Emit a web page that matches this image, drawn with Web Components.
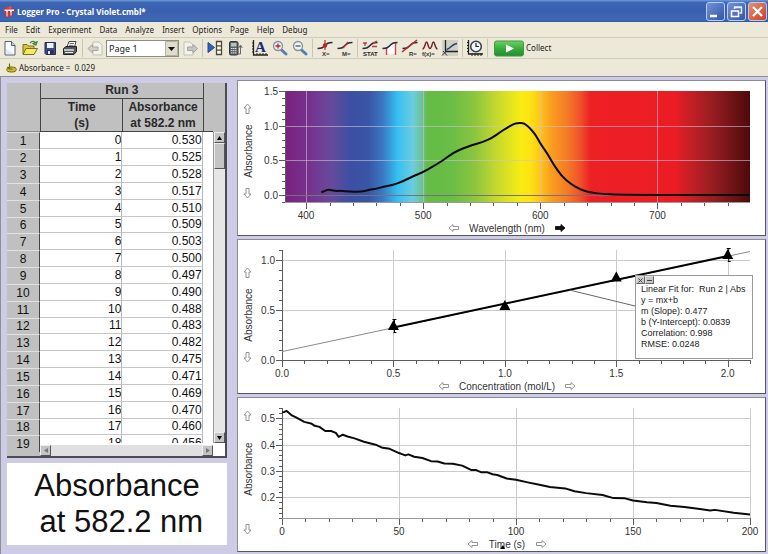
<!DOCTYPE html>
<html lang="en">
<head>
<meta charset="utf-8">
<title>Logger Pro - Crystal Violet.cmbl*</title>
<style>
  html, body { height: 100%; }
  body { margin: 0; font-family: "Liberation Sans", Arial, sans-serif; color: #222; }
</style>
</head>
<body>
<logger-app></logger-app>
<script>
const define = (name, html, extra) => {
  const tpl = document.createElement('template');
  tpl.innerHTML = html;
  customElements.define(name, class extends HTMLElement {
    constructor() {
      super();
      this.attachShadow({ mode: 'open' }).append(tpl.content.cloneNode(true));
    }
    connectedCallback() { if (extra) extra(this, this.shadowRoot); }
  });
};

/* ---------- icons ---------- */
const curve = '<path d="M0.5 8.5C5 8.5 6 7.500 8 5.500S11 2.500 15.500 2.500" fill="none" stroke="#2b2b45" stroke-width="1.600"/>';
const tiny = (x, t) => `<text x="${x}" y="15.500" font-family="Liberation Sans" font-size="6" font-weight="bold" fill="#333">${t}</text>`;
const ICONS = {
  new: '<path d="M3 1.500h6.500l3.500 4v9.500H3z" fill="#f8fbff" stroke="#52607c"/><path d="M9.500 1.500v4H13" fill="#b9d0ec" stroke="#52607c"/><path d="M4 14V9l8 5z" fill="#dfe9f7"/>',
  open: '<path d="M1 14V4.500h4l1.500 1.500H12v8z" fill="#d8c43c" stroke="#77701c"/><path d="M1 14.500l3-6h11.500l-3.500 6z" fill="#f6e860" stroke="#77701c"/><path d="M8 3c2-2.500 5-2 5.500.500M15 2l-1.200 3-2.600-1.500z" fill="none" stroke="#3d8a2e" stroke-width="1.300"/>',
  save: '<path d="M3 2.500h10.500v12H4L3 13.500z" fill="#3d4b86" stroke="#232b58"/><path d="M5 3h6.500v5H5z" fill="#f0f3fa"/><path d="M5 10h6.500v4.500H5z" fill="#2a2f50"/><path d="M6 11h2v3H6z" fill="#dfe4ee"/>',
  print: '<path d="M5 7l2-5.500h7L12.500 7z" fill="#fff" stroke="#444"/><path d="M7.500 3.500H12M7 5.300h4.500" stroke="#777"/><path d="M1.500 8.500L4 6.500h10.500v5L12 14.500H1.500z" fill="#55585c" stroke="#222"/><path d="M2 9h10v2H2z" fill="#c0c4c4"/><path d="M3 12.500h8" stroke="#eee"/>',
  prev: '<path d="M6 2h6l3 3v10H6z" fill="#f4f2ec" stroke="#c4c0b2"/><path d="M1 8.500l4.500-4v2.500H11v3.500H5.500V13z" fill="#d2cfc6" stroke="#aaa698"/>',
  next: '<path d="M2 2h6l3 3v10H2z" fill="#f4f2ec" stroke="#c4c0b2"/><path d="M15.500 8.500L11 4.500v2.500H5.500v3.500H11V13z" fill="#c6c6c2" stroke="#a4a29a"/>',
  import: '<path d="M1 2.500l6.500 5L1 12.500z" fill="#2f62ba" stroke="#1f4790"/><path d="M9.500 1.500h5v13h-5zM9.500 5.800h5M9.500 10.200h5" fill="#fffbe6" stroke="#4a4a3e" stroke-width="1.300"/>',
  calc: '<rect x="2.500" y="1.500" width="8.500" height="13.500" rx="1.500" fill="#596268" stroke="#30363a"/><path d="M4 3h5.500v3.500H4z" fill="#b5c6b4"/><path d="M4 8.500h5.500M4 10.700h5.500M4 12.900h5.500" stroke="#e0e4e4" stroke-dasharray="1.500 .5"/><path d="M13.500 13V6M11.700 8l1.800-3 1.800 3M11 14h2.500V12" fill="none" stroke="#666"/>',
  autoscale: '<path d="M1.500 0v15H16" fill="none" stroke="#222" stroke-width="1.300"/><path d="M0 3h2M0 6h2M0 9h2M0 12h2M5 13v2M8 13v2M11 13v2M14 13v2" stroke="#222"/><text x="3" y="12" font-family="Liberation Serif" font-weight="bold" font-size="15" fill="#1b2c78">A</text>',
  zoomin: '<path d="M8.500 9l5.500 5" stroke="#587dad" stroke-width="3" stroke-linecap="round"/><circle cx="6" cy="6" r="4.500" fill="#eef2f2" stroke="#8b9098" stroke-width="1.300"/><path d="M3.500 6h5M6 3.500v5" stroke="#b02a2a" stroke-width="1.300"/>',
  zoomout: '<path d="M8.500 9l5.500 5" stroke="#587dad" stroke-width="3" stroke-linecap="round"/><circle cx="6" cy="6" r="4.500" fill="#eef2f2" stroke="#8b9098" stroke-width="1.300"/><path d="M3.500 6h5" stroke="#555" stroke-width="1.300"/>',
  examine: curve + '<path d="M8 0v10" stroke="#c02626" stroke-width="1.200"/><circle cx="8" cy="5.500" r="2.200" fill="#c02626"/>' + tiny(5, 'X='),
  tangent: curve + '<path d="M6 8l5-6" stroke="#a33" stroke-width="1.300"/>' + tiny(5, 'M='),
  stats: curve + '<path d="M1 3h4M3 3v3M10 6.500h5M11 3l4-2" stroke="#c63a3a" stroke-width="1.300"/><text x="1" y="15.500" font-family="Liberation Sans" font-size="6" font-weight="bold" fill="#222">STAT</text>',
  integral: '<path d="M4.500 7.500C8 6 8 3 13 2.500v11H4.500z" fill="#fff"/><path d="M4.500 7v8M13.500 2v13" stroke="#cf4444" stroke-width="1.400"/>' + curve,
  linfit: curve + '<path d="M0 12L15 0" stroke="#b82e2e" stroke-width="1.600"/>' + tiny(7, 'R='),
  curvefit: '<path d="M0.500 9C3 9 3 2 4.500 2S6 8.500 8 8.500 10 2 11.500 2s1.500 7 4 7" fill="none" stroke="#7c1f2e" stroke-width="1.500"/><text x="0" y="15.500" font-family="Liberation Sans" font-size="6" font-weight="bold" fill="#333">f(x)=</text>',
  model: '<rect width="16" height="16" fill="#d2cfc3"/><path d="M3.500 0v11.500H16" fill="none" stroke="#222" stroke-width="1.300"/><path d="M4.500 9.500C9 9 9 4 15 3.500" fill="none" stroke="#27407a" stroke-width="1.600"/><path d="M0 15.500l5-5M1 11l4 4.500" stroke="#333"/>',
  clock: '<path d="M1.500 0v14H16" fill="none" stroke="#222" stroke-width="1.300"/><path d="M0 2.500h2M0 5.500h2M0 8.500h2M0 11.500h2M5 13v3M8 13v3M11 13v3M14 13v3" stroke="#222"/><circle cx="9" cy="6.500" r="5.300" fill="#f4f6fa" stroke="#343c52" stroke-width="1.500"/><path d="M9 3v3.500h3" fill="none" stroke="#222" stroke-width="1.200"/>'
};
define('tool-button', `
<style>
  :host { display: block; flex: none; }
  button { display: grid; place-items: center; width: 20px; height: 20px; padding: 0; border: 0; background: none; }
  svg { display: block; width: 16px; height: 16px; overflow: visible; }
</style>
<button type="button"><svg viewBox="0 0 16 16" aria-hidden="true"></svg></button>`,
(host, root) => {
  root.querySelector('svg').innerHTML = ICONS[host.getAttribute('icon')];
  root.querySelector('button').setAttribute('aria-label', host.getAttribute('label'));
});

define('tool-separator', `
<style>
  :host { display: block; flex: none; width: 5px; height: 18px; }
  i { display: block; width: 1px; height: 100%; margin-left: 2px; background: #c9c5b4; }
  :host([blank]) i { background: none; }
</style><i></i>`);

/* ---------- title bar ---------- */
define('title-bar', `
<style>
  :host { display: flex; align-items: center; gap: 2px; flex: none; height: 22px; padding: 0 1px 0 3px; box-sizing: border-box;
    background: linear-gradient(#6a9ad6, #3c66b4 12%, #3a60ae 50%, #3d68b5 90%, #3059a4); }
  h1 { flex: 1; margin: 0; font: bold 8px "Open Sans", "Noto Sans", sans-serif; color: #fff; }
  svg { display: block; }
  .box { display: flex; gap: 2px; }
  button { width: 19px; height: 19px; padding: 0; border: 1px solid #b9cdf0; border-radius: 3px; background: linear-gradient(135deg, #7394d8, #3355a8); }
  .close { background: linear-gradient(135deg, #ea8d70, #cc4024); }
</style>
<svg width="12" height="13" viewBox="0 0 12 13" aria-hidden="true"><path d="M5 1.500a5 5 0 1 0 3 9.500" fill="#d03a3a"/><path d="M1 4h10.500v2.500H9V11H7V6.500H5V12H3V6.500H1z" fill="#fff" stroke="#c03434"/><circle cx="7" cy="2.500" r="1.500" fill="#e05050"/></svg>
<h1><slot></slot></h1>
<div class="box">
  <button type="button" aria-label="Minimize"><svg width="17" height="17" viewBox="0 0 17 17"><path d="M3 13h7" stroke="#fff" stroke-width="2.500"/></svg></button>
  <button type="button" aria-label="Restore"><svg width="17" height="17" viewBox="0 0 17 17"><path d="M6.500 6V4.500h7V10H11.500M6 4h8" fill="none" stroke="#e8f0ff" stroke-width="1.400"/><path d="M3.500 8h7v5.500h-7zM3 8h8" fill="none" stroke="#fff" stroke-width="1.500"/></svg></button>
  <button type="button" class="close" aria-label="Close"><svg width="17" height="17" viewBox="0 0 17 17"><path d="M4 4l9 9M13 4l-9 9" stroke="#fff" stroke-width="2.300"/></svg></button>
</div>`);

/* ---------- menu ---------- */
define('menu-bar', `
<style>
  :host { display: block; flex: none; height: 16px; background: #ece9d8; border-bottom: 1px solid #cfccbc; box-sizing: border-box; }
  nav { display: flex; gap: 8px; padding-left: 5px; }
  button { padding: 0; border: 0; background: none; font: 8px/15px "Noto Sans", sans-serif; color: #222; }
</style>
<nav></nav>`, (host, root) => {
  root.querySelector('nav').innerHTML = ['File', 'Edit', 'Experiment', 'Data', 'Analyze', 'Insert', 'Options', 'Page', 'Help', 'Debug']
    .map(t => `<button type="button">${t}</button>`).join('');
});

/* ---------- toolbar ---------- */
define('tool-bar', `
<style>
  :host { display: flex; align-items: center; flex: none; height: 21px; box-sizing: border-box; background: #ece9d8; border-bottom: 1px solid #cfccbc; }
  .page { display: flex; align-items: center; margin: 0 1px; width: 73px; height: 17px; box-sizing: border-box; border: 1px solid #8d8c80; background: #fff; }
  select { flex: 1; min-width: 0; height: 15px; padding: 0 2px; border: 0; background: #fff; appearance: none; font: 9px/15px "Noto Sans", sans-serif; color: #222; }
  .page svg { flex: none; margin-left: -13px; pointer-events: none; }
  .collect { display: flex; align-items: center; gap: 2px; margin-left: 4px; padding: 0; border: 0; background: none; font: 8px/16px "Noto Sans", sans-serif; color: #222; }
</style>
<tool-button icon="new" label="New"></tool-button><tool-button icon="open" label="Open"></tool-button><tool-button icon="save" label="Save"></tool-button><tool-button icon="print" label="Print"></tool-button>
<tool-separator></tool-separator>
<tool-button icon="prev" label="Previous page"></tool-button>
<span class="page"><select aria-label="Page"><option>Page 1</option></select><svg width="13" height="15" viewBox="0 0 13 15"><path d="M0.500 .5h12v14h-12z" fill="#e0ddcd" stroke="#b5b2a4"/><path d="M3 6h7l-3.500 4z" fill="#111"/></svg></span>
<tool-button icon="next" label="Next page"></tool-button>
<tool-separator></tool-separator>
<tool-button icon="import" label="Data browser"></tool-button><tool-button icon="calc" label="Import from calculator"></tool-button>
<tool-separator blank></tool-separator>
<tool-button icon="autoscale" label="Autoscale"></tool-button><tool-button icon="zoomin" label="Zoom in"></tool-button><tool-button icon="zoomout" label="Zoom out"></tool-button>
<tool-separator></tool-separator>
<tool-button icon="examine" label="Examine"></tool-button><tool-button icon="tangent" label="Tangent"></tool-button>
<tool-separator></tool-separator>
<tool-button icon="stats" label="Statistics"></tool-button><tool-button icon="integral" label="Integral"></tool-button><tool-button icon="linfit" label="Linear fit"></tool-button><tool-button icon="curvefit" label="Curve fit"></tool-button><tool-button icon="model" label="Model"></tool-button>
<tool-separator></tool-separator>
<tool-button icon="clock" label="Data collection"></tool-button>
<tool-separator></tool-separator>
<button class="collect" type="button"><svg width="30" height="17" viewBox="0 0 30 17" aria-hidden="true"><defs><linearGradient id="g" x2="0" y2="1"><stop stop-color="#6fd06a"/><stop offset=".5" stop-color="#38ad3c"/><stop offset="1" stop-color="#268a30"/></linearGradient></defs><rect x=".5" y="1" width="29" height="15" rx="2" fill="url(#g)" stroke="#3f9a40"/><path d="M12 4.500l8 4-8 4z" fill="#fff"/></svg>Collect</button>`);

/* ---------- sensor readout ---------- */
define('sensor-bar', `
<style>
  :host { display: flex; align-items: center; gap: 2px; flex: none; height: 18px; padding: 0 0 0 6px; box-sizing: border-box; background: #ece9d8; border-bottom: 1px solid #8f8e96; font: 8px/16px "Noto Sans", sans-serif; color: #222; white-space: pre; }
</style>
<svg width="11" height="10" viewBox="0 0 11 10" aria-hidden="true"><ellipse cx="5.500" cy="6.500" rx="4.800" ry="2.500" fill="#c9bd2c" stroke="#6e6712"/><path d="M3.500 0.500v5.500M1.500 4l2 2h3" fill="none" stroke="#6e6712" stroke-width="1.200"/></svg><span><slot></slot></span>`);

/* ---------- data table ---------- */
define('data-table', `
<style>
  :host { display: grid; grid-template: minmax(0, 49px) minmax(0, 1fr) 13px / 33px minmax(0, 1fr) 12px; min-height: 0; overflow: hidden; box-sizing: border-box;
    background: #c0c0c0; border: solid #4c4c50; border-width: 0 2px 2px 0; font-size: 12px; color: #111; }
  .data { grid-area: 1 / 1 / 4 / 3; overflow: hidden; }
  table { width: 100%; table-layout: fixed; border-collapse: separate; border-spacing: 0; }
  th, td { box-sizing: border-box; padding: 0; white-space: nowrap; overflow: hidden; }
  thead th { line-height: 17px; border-bottom: 1px solid #444; color: #2a2a2a; }
  thead th + th { border-left: 1px solid #444; }
  thead .blank { border-bottom-color: #888; }
  thead .run { height: 16px; line-height: 15px; }
  thead .abs, thead .time { height: 33px; line-height: 16px; border-left: 1px solid #444; }
  tbody th, tbody td { height: 17px; line-height: 16px; }
  tbody tr:nth-child(6n) > * { height: 16px; line-height: 15px; }
  tbody th { font-weight: normal; text-align: center; border: solid; border-width: 1px 1px 0 0; border-color: #e2e2e2 #444 #444 #e2e2e2; }
  tbody td { text-align: right; background: #fff; border-bottom: 1px solid #c6c6c6; border-right: 1px solid #b8b8b8; }
  tbody td:last-child { border: 0; }
  .v { grid-area: 2 / 3; display: flex; flex-direction: column; border-left: 1px solid #999; background: #e6e6e6; }
  .h { grid-area: 3 / 2; display: flex; justify-content: space-between; border-top: 2px solid #fff; background: #e0e0e0; z-index: 1; }
  .corner { grid-area: 3 / 3; background: #fff; }
  button { flex: none; width: 11px; height: 11px; padding: 0; border: 1px solid; border-color: #eee #555 #555 #eee; background: #c4c4c4; display: grid; place-items: center; }
  .thumb { width: 11px; height: 26px; box-sizing: border-box; border: 1px solid; border-color: #eee #555 #555 #eee; background: #c4c4c4; }
  .fill { flex: 1; }
  svg { display: block; }
</style>
<div class="data"><table>
  <colgroup><col style="width:33px"><col style="width:40%"><col style="width:39%"><col></colgroup>
  <thead>
    <tr><th class="blank" rowspan="2"></th><th class="run" colspan="2">Run 3</th><th rowspan="2"></th></tr>
    <tr><th class="time">Time<br>(s)</th><th class="abs">Absorbance<br>at 582.2 nm</th></tr>
  </thead>
  <tbody></tbody>
</table></div>
<div class="v">
  <button type="button" aria-label="Scroll up"><svg width="5" height="4"><path d="M0 4L2.500 0 5 4z"/></svg></button>
  <div class="thumb"></div><div class="fill"></div>
  <button type="button" aria-label="Scroll down"><svg width="5" height="4"><path d="M0 0l2.500 4L5 0z"/></svg></button>
</div>
<div class="h">
  <button type="button" aria-label="Scroll left"><svg width="4" height="5"><path d="M4 0L0 2.500 4 5z" fill="#777"/></svg></button>
  <button type="button" aria-label="Scroll right"><svg width="4" height="5"><path d="M0 0l4 2.500L0 5z" fill="#777"/></svg></button>
</div>
<div class="corner"></div>`, (host, root) => {
  const values = [530, 525, 528, 517, 510, 509, 503, 500, 497, 490, 488, 483, 482, 475, 471, 469, 470, 460, 456];
  root.querySelector('tbody').innerHTML = values.map((v, i) =>
    `<tr><th scope="row">${i + 1}</th><td>${i}</td><td>0.${v}</td><td></td></tr>`).join('');
});

define('big-label', `
<style>
  :host { display: flex; align-items: center; justify-content: center; flex: none; height: 82px; background: #fff; font-size: 31px; line-height: 36px; color: #111; text-align: center; white-space: pre; }
</style><div><slot></slot></div>`);

/* ---------- graphs ---------- */
const GRAPHS = {
  spectrum: {
    left: 47, x: [382, 779], y: [-0.1, 1.5], xMajor: [400, 500, 600, 700], xMinor: 20, yMajor: [0, .5, 1, 1.5], yMinor: .1,
    xd: 0, yd: 1, title: 'Wavelength (nm)', half: 53, mid: 70, up: 42, down: 42, solidNext: true, smooth: true,
    bands: [[0, '#79217f'], [5, '#77318d'], [10, '#664a9c'], [14, '#3d4fa2'], [18, '#3a55a6'], [21, '#3a78c2'], [24.2, '#35c0f1'], [27.5, '#6dcce0'], [29.3, '#6cc49c'], [30.7, '#64bb46'], [36, '#6abd45'], [41, '#8dc63f'], [45.4, '#c5d82e'], [50.6, '#f7ec13'], [52.8, '#ffe212'], [54.9, '#fdc51b'], [57.1, '#f9a01f'], [60.7, '#f47b25'], [63.5, '#f0502a'], [65.7, '#ed2024'], [83.7, '#ed1c24'], [87.3, '#c32026'], [92.3, '#931d20'], [100, '#4d0a0c']],
    line: [[413, .04], [416, .062], [419, .082], [425, .058], [430, .062], [437, .048], [448, .05], [454, .075], [460, .09], [467, .125], [474, .145], [483, .2], [491, .27], [500, .33], [508, .41], [517, .5], [525, .605], [534, .673], [542, .72], [551, .765], [559, .825], [566, .91], [571, .965], [577, 1.025], [581, 1.04], [586, 1.035], [590, .985], [596, .87], [600, .74], [606, .6], [611, .45], [618, .275], [626, .16], [633, .09], [641, .043], [651, .02], [668, 0], [779, 0]]
  },
  fit: {
    left: 44, x: [0, 2.1], y: [0, 1.1], xMajor: [0, .5, 1, 1.5, 2], xMinor: .1, yMajor: [0, .5, 1], yMinor: .1,
    xd: 1, yd: 1, title: 'Concentration (mol/L)', half: 63, mid: 75, up: 42, down: 42,
    points: [[.5, .34, 1], [1, .54], [1.5, .825], [2, 1.05, 1]]
  },
  kinetics: {
    left: 44, x: [0, 200], y: [.12, .54], xMajor: [0, 50, 100, 150, 200], xMinor: 10, yMajor: [.2, .3, .4, .5], yMinor: .02,
    xd: 0, yd: 1, title: 'Time (s)', half: 34, mid: 71, up: 53, down: 60,
    line: [[0, .524], [1, .525], [2, .529], [4, .513], [6, .504], [9.5, .487], [12.4, .481], [14, .472], [16, .468], [18.5, .452], [21, .452], [23, .445], [24.2, .430], [26, .438], [28, .431], [31, .424], [35, .411], [40, .4], [43, .388], [46, .384], [50, .368], [52.7, .359], [54, .363], [56.5, .354], [60, .349], [63.7, .337], [66.5, .336], [69.4, .328], [73, .327], [77, .32], [81, .303], [83, .303], [85, .295], [87.5, .295], [90, .287], [92, .284], [96, .271], [100, .266], [105, .256], [110, .247], [114.5, .238], [121, .233], [125, .222], [130, .215], [137, .208], [141.6, .196], [146.6, .195], [150, .187], [156, .18], [160, .177], [166, .167], [172, .162], [178.6, .154], [183, .149], [185, .151], [193, .14], [200, .133]]
  }
};
const ARROW = 'M-5 0l4-3.500v2h5.500v3h-5.500v2z';
function tracePath(pts, smooth) {
  if (!smooth) return 'M' + pts.map(p => p.join(' ')).join('L');
  let d = `M${pts[0].join(' ')}`;
  for (let i = 1; i < pts.length - 1; i++) {
    const [a, b] = [pts[i], pts[i + 1]];
    d += `Q${a.join(' ')} ${(a[0] + b[0]) / 2} ${(a[1] + b[1]) / 2}`;
  }
  return d + `L${pts[pts.length - 1].join(' ')}`;
}
function drawGraph(c, W, H) {
  const L = c.left, R = W - 15, T = 10, B = H - 33, out = [];
  const X = v => L + (v - c.x[0]) / (c.x[1] - c.x[0]) * (R - L);
  const Y = v => B - (v - c.y[0]) / (c.y[1] - c.y[0]) * (B - T);
  const snap = v => Math.round(v) + .5;
  const line = (x1, y1, x2, y2, s, w = 1) => out.push(`<path d="M${x1} ${y1}L${x2} ${y2}" stroke="${s}" stroke-width="${w}"/>`);
  const steps = (range, step) => {
    const list = [];
    for (let i = Math.ceil(range[0] / step - 1e-6); i * step <= range[1] + 1e-6; i++) list.push(i * step);
    return list;
  };
  if (c.bands) {
    out.push('<defs><linearGradient id="s">' + c.bands.map(b => `<stop offset="${b[0]}%" stop-color="${b[1]}"/>`).join('') + `</linearGradient></defs><rect x="${L}" y="${T}" width="${R - L}" height="${B - T}" fill="url(#s)"/>`);
  }
  const grid = c.bands ? 'rgba(205,195,215,.6)' : '#cbcbcb';
  c.xMajor.forEach(v => line(snap(X(v)), T, snap(X(v)), B, grid));
  c.yMajor.forEach(v => { if (v !== 1.5) line(L, snap(Y(v)), R, snap(Y(v)), c.bands && v === 0 ? '#77727a' : grid); });
  const axis = '#5c5c5c';
  steps(c.x, c.xMinor).forEach(v => line(snap(X(v)), B, snap(X(v)), B + 4, axis));
  steps(c.y, c.yMinor).forEach(v => line(L - 3, snap(Y(v)), L, snap(Y(v)), axis));
  c.xMajor.forEach(v => {
    line(snap(X(v)), B, snap(X(v)), B + 7, axis);
    out.push(`<text x="${X(v)}" y="${B + 17}" text-anchor="middle">${v.toFixed(c.xd)}</text>`);
  });
  c.yMajor.forEach(v => {
    line(L - 6, snap(Y(v)), L, snap(Y(v)), axis);
    out.push(`<text x="${L - 7}" y="${Math.round(Y(v)) + 4}" text-anchor="end">${v.toFixed(c.yd)}</text>`);
  });
  line(L + .5, T, L + .5, B, axis);
  line(L, B + .5, R, B + .5, c.points ? axis : '#9a9a9a');
  if (c.line) out.push(`<path d="${tracePath(c.line.map(p => [X(p[0]), Y(p[1])]), c.smooth)}" fill="none" stroke="#0c0a0c" stroke-width="2" stroke-linejoin="round"/>`);
  if (c.points) {
    line(X(0), Y(.084), X(2.1), Y(1.085), '#8a8a8a');
    line(X(.5), Y(.325), X(2), Y(1.04), '#000', 2);
    line(X(1.29), Y(.7), W - 130, 66, '#666');
    c.points.forEach(([x, y, bar]) => {
      const px = X(x), py = Y(y);
      out.push(`<path d="M${px} ${py - 6}l5.500 10h-11z" fill="#000"/>`);
      if (bar) out.push(`<path d="M${px - 1} ${py - 6.5}h4M${px} ${py + 6.5}h3M${px + 1} ${py - 6}v12" stroke="#000"/>`);
    });
  }
  const cx = Math.round(W / 2) + 5, ty = B + 30;
  out.push(`<text x="${cx}" y="${ty}" text-anchor="middle">${c.title}</text>`);
  out.push(`<text transform="translate(14 ${c.mid}) rotate(-90)" text-anchor="middle">Absorbance</text>`);
  const arrow = (x, y, a, solid) => out.push(`<path d="${ARROW}" transform="translate(${x} ${y}) rotate(${a})" fill="${solid ? '#111' : '#fff'}" stroke="${solid ? '#111' : '#888'}" stroke-width=".9"/>`);
  arrow(cx - c.half, ty - 4, 0);
  arrow(cx + c.half, ty - 4, 180, c.solidNext);
  arrow(9.5, c.mid - c.up, 90);
  arrow(9.5, c.mid + c.down, -90);
  if (c === GRAPHS.kinetics) out.push(`<path d="M${cx - 7} ${ty + 1}l3-4 2 4z" fill="#000"/>`);
  return out.join('');
}
define('graph-panel', `
<style>
  :host { display: block; position: relative; min-width: 0; min-height: 0; overflow: hidden; background: #fff; border: 1px solid; border-color: #8a8a98 #55555f #55555f #8a8a98; }
  svg { display: block; width: 100%; height: 100%; font-family: "Liberation Sans", Arial, sans-serif; font-size: 10px; fill: #333; }
</style>
<svg role="img"></svg><slot></slot>`, (host, root) => {
  const svg = root.querySelector('svg'), graph = GRAPHS[host.getAttribute('graph')];
  svg.setAttribute('aria-label', graph.title);
  const draw = () => { svg.innerHTML = drawGraph(graph, host.clientWidth, host.clientHeight); };
  draw();
  new ResizeObserver(draw).observe(host);
});

define('fit-note', `
<style>
  :host { position: absolute; right: 12px; top: 35px; width: 118px; height: 84px; box-sizing: border-box; border: 1px solid #999; background: #fff; font-size: 9px; line-height: 11px; color: #222; }
  .bar { display: flex; height: 8px; }
  button { width: 9px; height: 8px; padding: 0; border: 1px solid; border-color: #ddd #666 #666 #ddd; background: #c8c8c8; display: grid; place-items: center; }
  svg { display: block; }
  p { margin: 0; padding-left: 5px; white-space: pre; }
</style>
<div class="bar"><button type="button" aria-label="Close"><svg width="5" height="5"><path d="M.5 .5l4 4M4.500 .5l-4 4" stroke="#444"/></svg></button><button type="button" aria-label="Collapse"><svg width="5" height="5"><path d="M0 2.500h5" stroke="#444"/></svg></button></div>
<p>Linear Fit for:  Run 2 | Abs</p><p>y = mx+b</p><p>m (Slope): 0.477</p><p>b (Y-Intercept): 0.0839</p><p>Correlation: 0.998</p><p>RMSE: 0.0248</p>`);

/* ---------- application ---------- */
define('logger-app', `
<style>
  :host { display: flex; flex-direction: column; height: 100vh; background: #cdcbe6; }
  main { flex: 1; min-height: 0; display: grid; grid-template-columns: 220px minmax(0, 1fr); gap: 10px; padding: 3px 2px 2px 6px; border-left: 1px solid #8f8e96; }
  .side { display: flex; flex-direction: column; gap: 5px; padding: 3px 0 7px; min-height: 0; }
  data-table { flex: 1; }
  .graphs { display: grid; grid-template-rows: 156fr 155fr 155fr; gap: 3px; min-height: 0; }
</style>
<title-bar>Logger Pro - Crystal Violet.cmbl*</title-bar>
<menu-bar></menu-bar>
<tool-bar></tool-bar>
<sensor-bar>Absorbance =  0.029</sensor-bar>
<main>
  <div class="side">
    <data-table></data-table>
    <big-label>Absorbance
 at 582.2 nm</big-label>
  </div>
  <div class="graphs">
    <graph-panel graph="spectrum"></graph-panel>
    <graph-panel graph="fit"><fit-note></fit-note></graph-panel>
    <graph-panel graph="kinetics"></graph-panel>
  </div>
</main>`);
</script>
</body>
</html>
